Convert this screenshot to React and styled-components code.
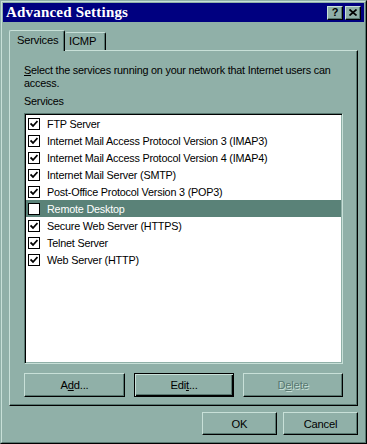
import React from 'react'
import styled, { createGlobalStyle } from 'styled-components'

const face = '#90b0a8'
const light = '#c8e0d8'
const shadow = '#587870'
const dark = '#000000'

const GlobalStyle = createGlobalStyle`
    html, body {
        margin: 0;
        padding: 0;
        background: ${face};
    }
    * {
        box-sizing: border-box;
    }
`

const Window = styled.div`
    width: 367px;
    height: 444px;
    background: ${face};
    border: 1px solid;
    border-color: ${face} ${dark} ${dark} ${face};
    font-family: "Liberation Sans", Arial, sans-serif;
    font-size: 10.8px;
    letter-spacing: -0.2px;
    color: #000;
`

const Frame = styled.div`
    height: 100%;
    border: 1px solid;
    border-color: ${light} ${shadow} ${shadow} ${light};
    padding: 1px;
    display: flex;
    flex-direction: column;
`

const TitleBar = styled.div`
    height: 19px;
    background: #000080;
    display: flex;
    align-items: center;
    padding: 0 3px 0 3px;
`

const Title = styled.div`
    flex: 1;
    color: #fff;
    font-family: "Liberation Serif", "Times New Roman", serif;
    font-weight: bold;
    font-size: 15px;
    line-height: 19px;
    letter-spacing: 0.2px;
`

const CaptionButton = styled.div`
    width: 16px;
    height: 14px;
    margin-left: ${p => p.gap || 0}px;
    background: ${face};
    border: 1px solid;
    border-color: ${light} ${dark} ${dark} ${light};
    box-shadow: inset -1px -1px ${shadow};
    display: flex;
    align-items: center;
    justify-content: center;
    font-weight: bold;
    font-size: 11px;
    letter-spacing: 0;
    line-height: 1;
`

const TabStrip = styled.div`
    display: flex;
    align-items: flex-end;
    margin: 8px 6px 0 6px;
    height: 20px;
`

const Tab = styled.div`
    position: relative;
    z-index: ${p => (p.active ? 2 : 1)};
    width: ${p => p.w}px;
    height: ${p => (p.active ? 21 : 18)}px;
    margin-bottom: ${p => (p.active ? -1 : 0)}px;
    background: ${face};
    border-top: 1px solid ${light};
    border-left: ${p => (p.first || p.active ? `1px solid ${light}` : 'none')};
    border-right: 1px solid ${dark};
    border-radius: 2px 2px 0 0;
    box-shadow: inset -1px 0 ${shadow};
    padding: ${p => (p.active ? '3px 0 0 7px' : '2px 0 0 4px')};
    line-height: 13px;
    font-size: 11.2px;
`

const Panel = styled.div`
    margin: 0 6px;
    border: 1px solid;
    border-color: ${light} ${dark} ${dark} ${light};
    box-shadow: inset -1px -1px ${shadow};
    padding: 13px 14px 8px 14px;
    display: flex;
    flex-direction: column;
`

const Intro = styled.p`
    margin: 0;
    line-height: 13px;
`

const Label = styled.div`
    margin-top: 5px;
    line-height: 13px;
`

const ListBox = styled.div`
    margin-top: 5px;
    height: 251px;
    background: #fff;
    border: 1px solid;
    border-color: ${shadow} ${light} ${light} ${shadow};
    box-shadow: inset 1px 1px ${dark}, inset -1px -1px ${face};
    padding: 1px 1px;
`

const Row = styled.div`
    height: 17px;
    display: flex;
    align-items: center;
    padding-left: 2px;
    background: ${p => (p.selected ? '#5a8278' : 'transparent')};
    color: ${p => (p.selected ? '#fff' : '#000')};
`

const Box = styled.span`
    width: 12px;
    height: 12px;
    border: 1px solid #000;
    background: #fff;
    display: flex;
    align-items: center;
    justify-content: center;
    margin-right: 7px;
    flex-shrink: 0;
`

const ButtonRow = styled.div`
    margin-top: 9px;
    display: grid;
    grid-template-columns: 101px 100px 100px;
    column-gap: 9px;
`

const Button = styled.div`
    height: ${p => p.h || 24}px;
    width: ${p => (p.w ? `${p.w}px` : 'auto')};
    background: ${face};
    border: 1px solid;
    border-color: ${p => (p.isDefault ? `${dark}` : `${light} ${dark} ${dark} ${light}`)};
    box-shadow: ${p =>
        p.isDefault
            ? `inset 1px 1px ${light}, inset -1px -1px ${dark}, inset -2px -2px ${shadow}`
            : `inset -1px -1px ${shadow}`};
    display: flex;
    align-items: center;
    justify-content: center;
    font-size: 11.2px;
    color: ${p => (p.disabled ? shadow : '#000')};
    text-shadow: ${p => (p.disabled ? `1px 1px ${light}` : 'none')};
`

const U = styled.span`
    text-decoration: underline;
    text-underline-offset: 1px;
`

const Footer = styled.div`
    display: flex;
    justify-content: flex-end;
    gap: 6px;
    margin: 6px 6px 0 0;
`

const Check = () => (
    <svg width="8" height="8" viewBox="0 0 8 8">
        <path d="M0.5 3.5 L3 6 L7.5 1" stroke="#000" strokeWidth="1.8" fill="none" />
    </svg>
)

const CloseGlyph = () => (
    <svg width="8" height="7" viewBox="0 0 8 7">
        <path d="M0.5 0.5 L7.5 6.5 M7.5 0.5 L0.5 6.5" stroke="#000" strokeWidth="1.7" />
    </svg>
)

const services = [
    { name: 'FTP Server', on: true },
    { name: 'Internet Mail Access Protocol Version 3 (IMAP3)', on: true },
    { name: 'Internet Mail Access Protocol Version 4 (IMAP4)', on: true },
    { name: 'Internet Mail Server (SMTP)', on: true },
    { name: 'Post-Office Protocol Version 3 (POP3)', on: true },
    { name: 'Remote Desktop', on: false, selected: true },
    { name: 'Secure Web Server (HTTPS)', on: true },
    { name: 'Telnet Server', on: true },
    { name: 'Web Server (HTTP)', on: true },
]

const App = () => {
    const rows = services.map(s => (
        <Row key={s.name} selected={s.selected}>
            <Box>{s.on && <Check />}</Box>
            {s.name}
        </Row>
    ))

    return (
        <>
            <GlobalStyle />
            <Window>
                <Frame>
                    <TitleBar>
                        <Title>Advanced Settings</Title>
                        <CaptionButton>?</CaptionButton>
                        <CaptionButton gap={2}>
                            <CloseGlyph />
                        </CaptionButton>
                    </TitleBar>
                    <TabStrip>
                        <Tab active first w={56}>Services</Tab>
                        <Tab w={41}>ICMP</Tab>
                    </TabStrip>
                    <Panel>
                        <Intro>
                            <U>S</U>elect the services running on your network that Internet users can access.
                        </Intro>
                        <Label>Services</Label>
                        <ListBox>{rows}</ListBox>
                        <ButtonRow>
                            <Button>
                                A<U>d</U>d...
                            </Button>
                            <Button isDefault>
                                Edi<U>t</U>...
                            </Button>
                            <Button disabled>
                                D<U>e</U>lete
                            </Button>
                        </ButtonRow>
                    </Panel>
                    <Footer>
                        <Button w={75} h={23}>OK</Button>
                        <Button w={75} h={23}>Cancel</Button>
                    </Footer>
                </Frame>
            </Window>
        </>
    )
}

export default App
